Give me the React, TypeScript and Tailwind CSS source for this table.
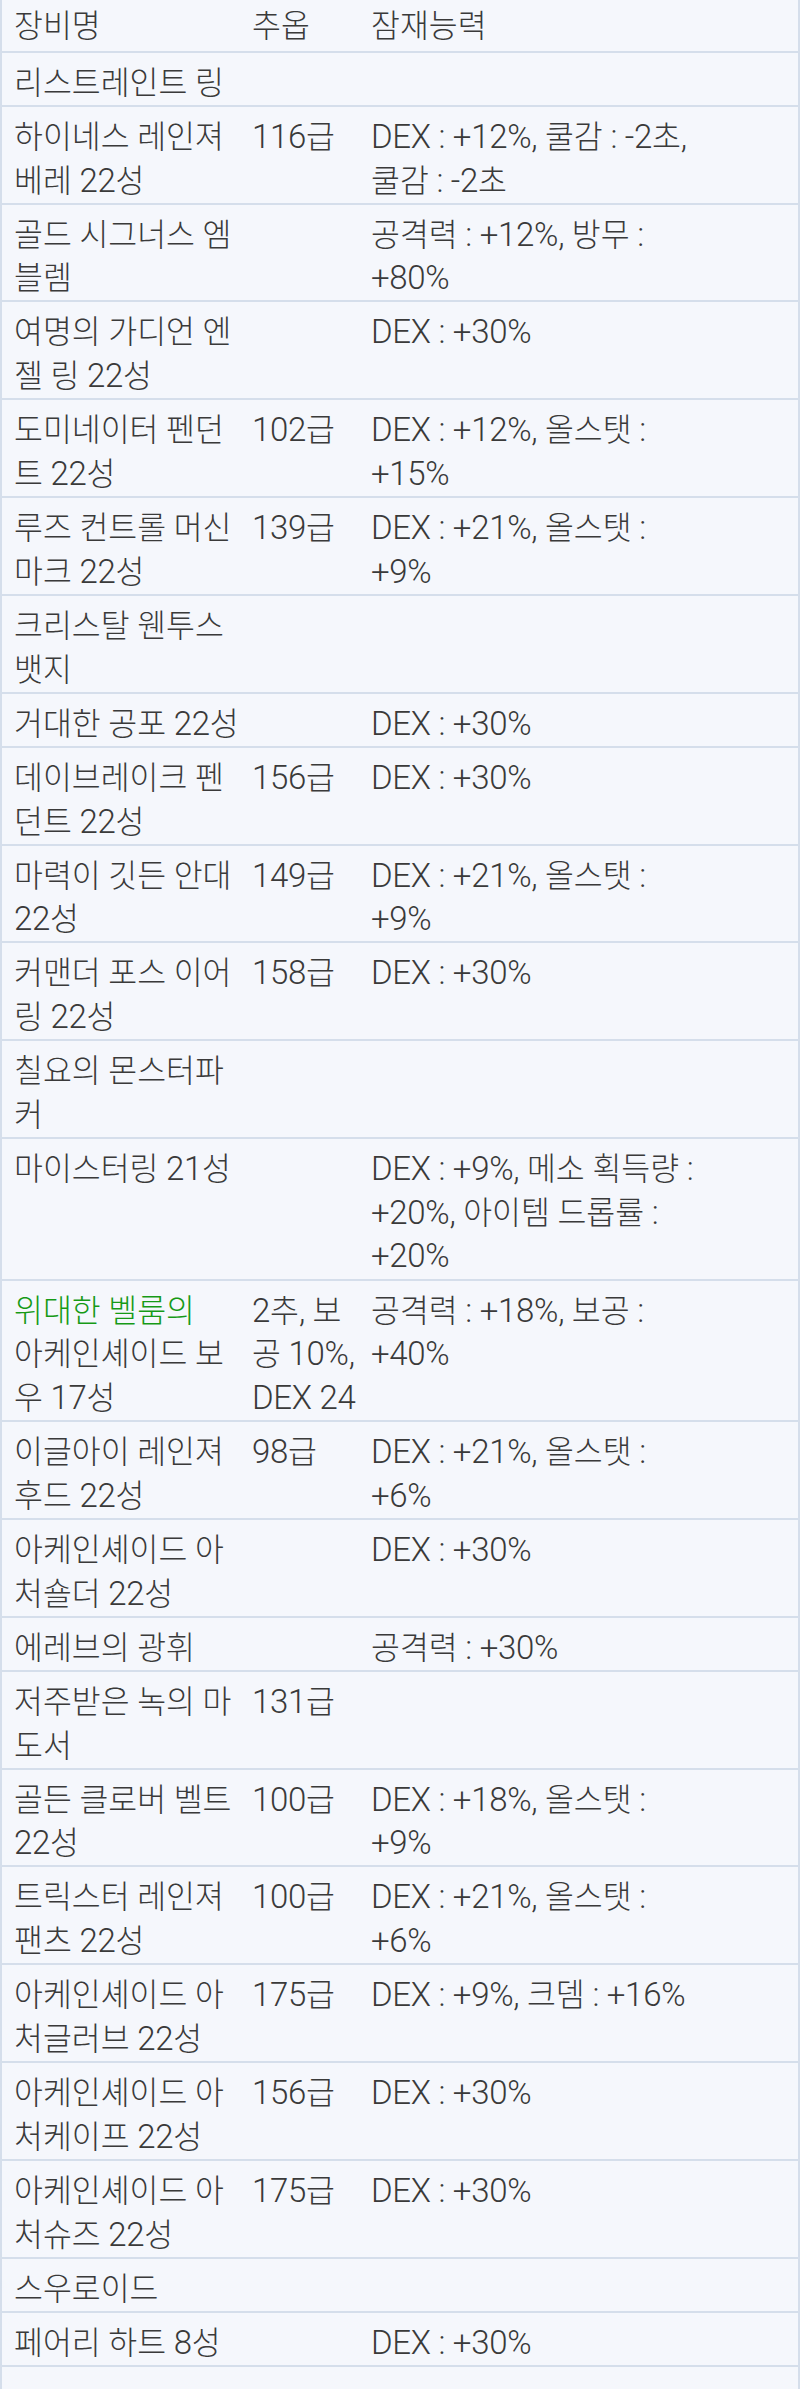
type Row = {
  name: React.ReactNode[];
  extra?: string[];
  potential?: string[];
};

const rows: Row[] = [
  { name: ['리스트레인트 링'] },
  { name: ['하이네스 레인져', '베레 22성'], extra: ['116급'], potential: ['DEX : +12%, 쿨감 : -2초,', '쿨감 : -2초'] },
  { name: ['골드 시그너스 엠', '블렘'], potential: ['공격력 : +12%, 방무 :', '+80%'] },
  { name: ['여명의 가디언 엔', '젤 링 22성'], potential: ['DEX : +30%'] },
  { name: ['도미네이터 펜던', '트 22성'], extra: ['102급'], potential: ['DEX : +12%, 올스탯 :', '+15%'] },
  { name: ['루즈 컨트롤 머신', '마크 22성'], extra: ['139급'], potential: ['DEX : +21%, 올스탯 :', '+9%'] },
  { name: ['크리스탈 웬투스', '뱃지'] },
  { name: ['거대한 공포 22성'], potential: ['DEX : +30%'] },
  { name: ['데이브레이크 펜', '던트 22성'], extra: ['156급'], potential: ['DEX : +30%'] },
  { name: ['마력이 깃든 안대', '22성'], extra: ['149급'], potential: ['DEX : +21%, 올스탯 :', '+9%'] },
  { name: ['커맨더 포스 이어', '링 22성'], extra: ['158급'], potential: ['DEX : +30%'] },
  { name: ['칠요의 몬스터파', '커'] },
  { name: ['마이스터링 21성'], potential: ['DEX : +9%, 메소 획득량 :', '+20%, 아이템 드롭률 :', '+20%'] },
  {
    name: [<span className="text-[#169a16]"><Txt s="위대한 벨룸의" /></span>, '아케인셰이드 보', '우 17성'],
    extra: ['2추, 보', '공 10%,', 'DEX 24'],
    potential: ['공격력 : +18%, 보공 :', '+40%'],
  },
  { name: ['이글아이 레인져', '후드 22성'], extra: ['98급'], potential: ['DEX : +21%, 올스탯 :', '+6%'] },
  { name: ['아케인셰이드 아', '처숄더 22성'], potential: ['DEX : +30%'] },
  { name: ['에레브의 광휘'], potential: ['공격력 : +30%'] },
  { name: ['저주받은 녹의 마', '도서'], extra: ['131급'] },
  { name: ['골든 클로버 벨트', '22성'], extra: ['100급'], potential: ['DEX : +18%, 올스탯 :', '+9%'] },
  { name: ['트릭스터 레인져', '팬츠 22성'], extra: ['100급'], potential: ['DEX : +21%, 올스탯 :', '+6%'] },
  { name: ['아케인셰이드 아', '처글러브 22성'], extra: ['175급'], potential: ['DEX : +9%, 크뎀 : +16%'] },
  { name: ['아케인셰이드 아', '처케이프 22성'], extra: ['156급'], potential: ['DEX : +30%'] },
  { name: ['아케인셰이드 아', '처슈즈 22성'], extra: ['175급'], potential: ['DEX : +30%'] },
  { name: ['스우로이드'] },
  { name: ['페어리 하트 8성'], potential: ['DEX : +30%'] },
];

// hangul runs are set a bit smaller than the latin ones
function Txt({ s }: { s: string }) {
  const parts = s.split(/([\uAC00-\uD7A3 ]+)/).filter(Boolean);
  return (
    <>
      {parts.map((p, i) =>
        /[\uAC00-\uD7A3]/.test(p) ? (
          <span key={i} className="text-[31.4px] leading-none tracking-[0px]">
            {p}
          </span>
        ) : (
          <span key={i} className="leading-none">
            {p}
          </span>
        )
      )}
    </>
  );
}

function Lines({ items }: { items?: React.ReactNode[] }) {
  if (!items) return null;
  return (
    <>
      {items.map((line, i) => (
        <div key={i} className="h-[43.7px]">
          {typeof line === 'string' ? <Txt s={line} /> : line}
        </div>
      ))}
    </>
  );
}

function TableRow({ row }: { row: Row }) {
  return (
    <div className="grid grid-cols-[250px_119px_1fr] border-b-2 border-[#d5deeb] pt-[8px] pb-[0.45px]">
      <div className="pl-[12px]">
        <Lines items={row.name} />
      </div>
      <div>
        <Lines items={row.extra} />
      </div>
      <div>
        <Lines items={row.potential} />
      </div>
    </div>
  );
}

export default function App() {
  return (
    <div
      className="min-h-screen w-[800px] bg-[#f5f7fc] text-[33px] font-light leading-[43.7px] tracking-[-0.3px] text-[#3a3a3a] whitespace-nowrap"
      style={{ fontFamily: 'Roboto, "Noto Sans CJK KR", sans-serif' }}
    >
      <div className="border-x-2 border-[#d5deeb]">
        <div className="grid grid-cols-[250px_119px_1fr] border-b-2 border-[#d5deeb] pt-[4px] pb-[3px]">
          <div className="h-[43.7px] pl-[12px]">
            <Txt s="장비명" />
          </div>
          <div className="h-[43.7px]">
            <Txt s="추옵" />
          </div>
          <div className="h-[43.7px]">
            <Txt s="잠재능력" />
          </div>
        </div>
        {rows.map((row, i) => (
          <TableRow key={i} row={row} />
        ))}
        <div className="h-[24px] border-b-2 border-[#d5deeb]"></div>
      </div>
    </div>
  );
}
